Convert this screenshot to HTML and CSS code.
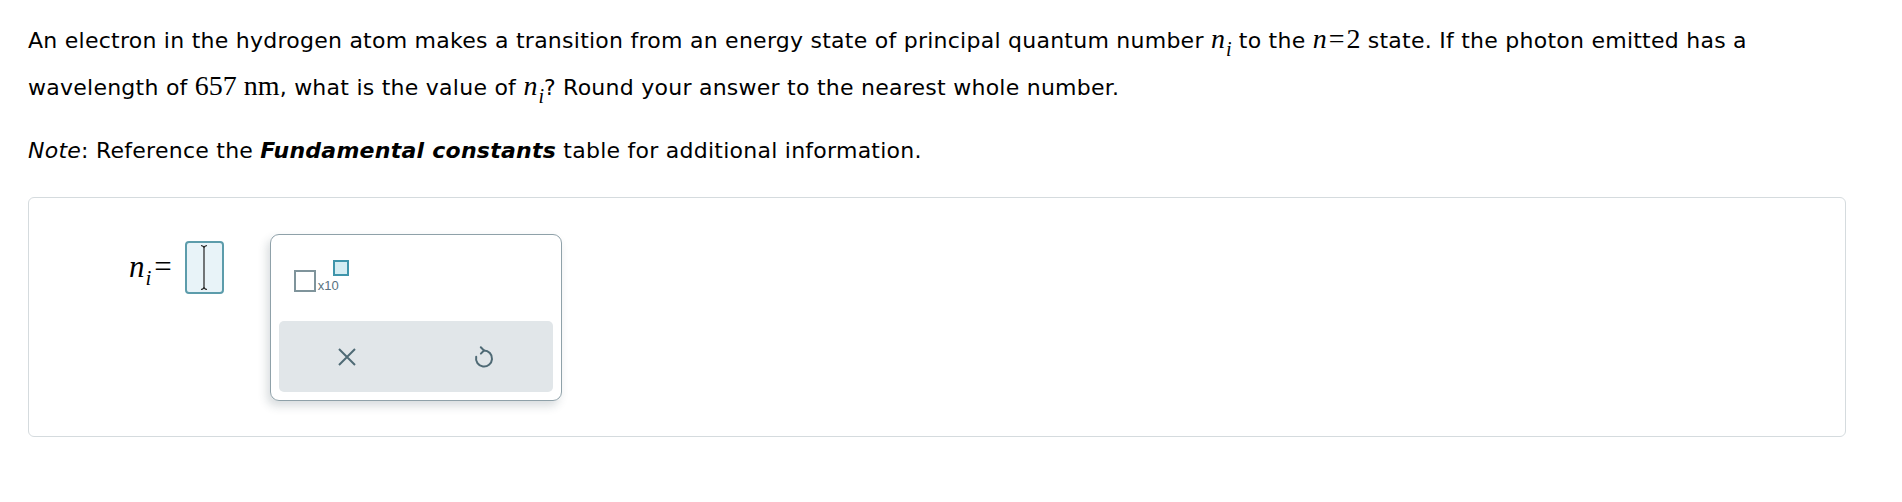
FILE: index.html
```html
<!DOCTYPE html>
<html lang="en">
<head>
<meta charset="utf-8">
<title>Question</title>
<link rel="stylesheet" href="styles.css">
</head>
<body>
<div class="page">
  <p class="q">An electron in the hydrogen atom makes a transition from an energy state of principal quantum number <span class="m"><i>n</i><sub><i>i</i></sub></span> to the <span class="m"><i>n</i><span class="eqs">=</span>2</span> state. If the photon emitted has a wavelength of <span class="m">657 nm</span>, what is the value of <span class="m"><i>n</i><sub><i>i</i></sub></span>? Round your answer to the nearest whole number.</p>
  <p class="note"><i>Note</i>: Reference the <b><i>Fundamental constants</i></b> table for additional information.</p>
  <div class="answer">
    <div class="eq">
      <span class="m lbl"><i>n</i><sub><i>i</i></sub><span class="eqs2">=</span></span>
      <span class="input">
        <svg class="ibeam" width="10" height="49" viewBox="0 0 10 49">
          <path d="M2 2.5 Q5 3 5 5 Q5 3 8 2.5 M5 5 V44 M2 46.5 Q5 46 5 44 Q5 46 8 46.5" fill="none" stroke="#222" stroke-width="1.2"/>
        </svg>
      </span>
    </div>
    <div class="popup">
      <div class="sci">
        <span class="base"></span>
        <span class="x10">x10</span>
        <span class="sup"></span>
      </div>
      <div class="btns">
        <div class="btn">
          <svg width="22" height="22" viewBox="0 0 22 22"><path d="M3 3 L19 19 M19 3 L3 19" stroke="#4f6a75" stroke-width="2" fill="none"/></svg>
        </div>
        <div class="btn">
          <svg width="24" height="24" viewBox="0 0 24 24"><path d="M12 5.5 A8 8 0 1 1 4.2 11.8" stroke="#4f6a75" stroke-width="2" fill="none" stroke-linecap="round"/><path d="M8.8 2.3 L12 5.5 L8.9 8.6" stroke="#4f6a75" stroke-width="2" fill="none" stroke-linecap="round" stroke-linejoin="round"/></svg>
        </div>
      </div>
    </div>
  </div>
</div>
</body>
</html>
```
FILE: styles.css
```css
body {
  margin: 0;
  background: #fff;
  color: #000;
  font-family: "DejaVu Sans", Verdana, sans-serif;
  font-size: 22px;
  letter-spacing: 0.25px;
}

.page {
  padding: 0 56px 0 28px;
}

.q {
  max-width: 1780px;
  margin: 17px 0 0;
  line-height: 47px;
}

.note {
  margin: 16px 0 0;
  line-height: 47px;
}

.m {
  font-family: "Liberation Serif", "Times New Roman", serif;
  font-size: 28px;
  line-height: 1;
  letter-spacing: 0;
}

.m sub {
  font-size: 20px;
  line-height: 1;
  vertical-align: -8px;
  margin-left: 1px;
}

.eqs {
  margin: 0 2px;
}

.answer {
  margin-top: 23px;
  border: 1px solid #d5dbde;
  border-radius: 6px;
  padding: 36px 0 35px 100px;
  display: flex;
  align-items: flex-start;
}

.eq {
  display: flex;
  align-items: center;
  margin-top: 7px;
}

.lbl {
  font-size: 31px;
  line-height: 1;
  margin-top: 4px;
}

.lbl sub {
  font-size: 21px;
}

.eqs2 {
  margin-left: 3px;
}

.input {
  width: 35px;
  height: 49px;
  margin-left: 13px;
  border: 2px solid #5c9cab;
  border-radius: 4px;
  background: #e8f3f8;
  display: flex;
  justify-content: center;
}

.popup {
  margin-left: 46px;
  width: 274px;
  height: 157px;
  padding: 0 8px 8px;
  border: 1px solid #8fa1a9;
  border-radius: 9px;
  box-shadow: -3px 5px 10px rgba(40, 60, 70, 0.18);
  display: flex;
  flex-direction: column;
}

.sci {
  height: 86px;
  padding: 25px 0 0 15px;
  box-sizing: border-box;
  display: flex;
  align-items: flex-start;
}

.base {
  width: 18px;
  height: 18px;
  margin-top: 10px;
  border: 2px solid #7f949b;
}

.x10 {
  margin-top: 19px;
  margin-left: 2px;
  font-family: "Liberation Sans", Arial, sans-serif;
  font-size: 13px;
  line-height: 13px;
  letter-spacing: 0;
  color: #587280;
}

.sup {
  width: 12px;
  height: 12px;
  margin-left: -6px;
  border: 2px solid #3f95ab;
  background: #d4edf3;
}

.btns {
  flex: 1;
  display: flex;
  background: #e1e6e9;
  border-radius: 5px;
}

.btn {
  flex: 1;
  display: flex;
  align-items: center;
  justify-content: center;
}
```
